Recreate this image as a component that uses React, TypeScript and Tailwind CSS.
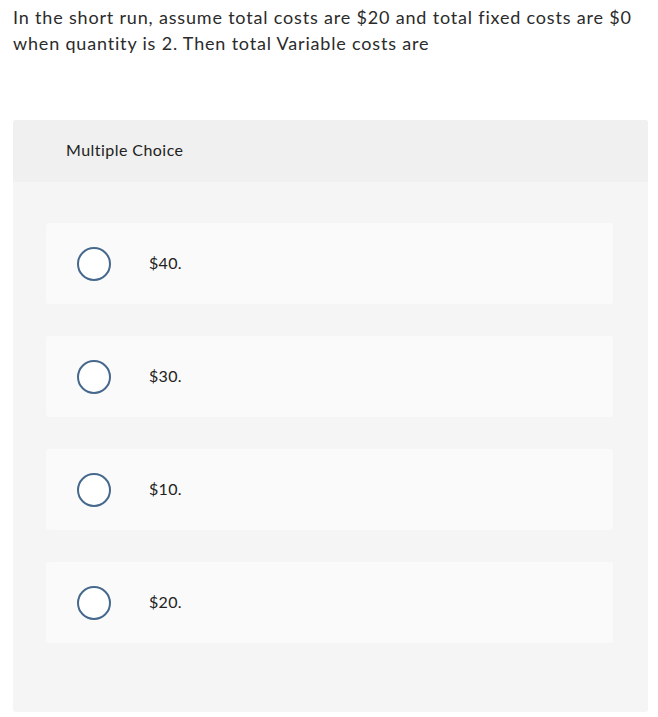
import React from "react";

const options = ["$40.", "$30.", "$10.", "$20."];

export default function App() {
  return (
    <div className="w-[658px] h-[717px] bg-white" style={{ fontFamily: "Lato, 'Open Sans', sans-serif" }}>
      <div className="pt-[4px] pl-[13px] pr-[6px] text-[18px] leading-[26px] tracking-[0.82px] text-[#2b2b2b]">
        In the short run, assume total costs are $20 and total fixed costs are $0 when quantity is 2. Then total Variable costs are
      </div>
      <div className="mt-[64px] ml-[13px] w-[635px] rounded-[3px] bg-[#f5f5f5] overflow-hidden">
        <div className="h-[62px] bg-[#f0f0f0] pl-[53px] pb-[2px] flex items-center text-[16px] tracking-[0.45px] text-[#222]">
          Multiple Choice
        </div>
        <div className="pt-[41px] pb-[69px] pl-[33px] pr-[35px] flex flex-col gap-[32px]">
          {options.map((o) => (
            <div key={o} className="h-[81px] rounded-[3px] bg-[#fafafa] flex items-center pl-[31px]">
              <div className="w-[34px] h-[34px] rounded-full border-2 border-[#45688c] bg-white shrink-0" />
              <div className="ml-[38px] pb-[2px] text-[16px] tracking-[0.3px] text-[#222]">{o}</div>
            </div>
          ))}
        </div>
      </div>
    </div>
  );
}
